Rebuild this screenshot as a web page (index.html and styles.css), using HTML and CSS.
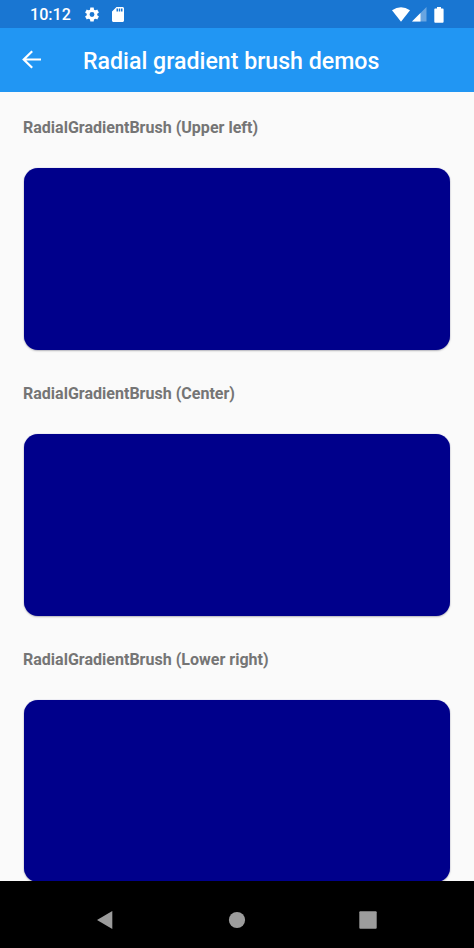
FILE: index.html
```html
<!DOCTYPE html>
<html lang="en">
<head>
<meta charset="utf-8">
<title>Radial gradient brush demos</title>
<link rel="stylesheet" href="styles.css">
</head>
<body>
<div class="screen">
  <div class="status">
    <span class="time">10:12</span>
    <svg class="gear" viewBox="2 2 20 20"><path d="M19.43 12.98c.04-.32.07-.64.07-.98s-.03-.66-.07-.98l2.11-1.65c.19-.15.24-.42.12-.64l-2-3.46c-.12-.22-.39-.3-.61-.22l-2.49 1c-.52-.4-1.08-.73-1.69-.98l-.38-2.65C14.46 2.18 14.25 2 14 2h-4c-.25 0-.46.18-.49.42l-.38 2.65c-.61.25-1.17.59-1.69.98l-2.49-1c-.23-.09-.49 0-.61.22l-2 3.46c-.13.22-.07.49.12.64l2.11 1.65c-.04.32-.07.65-.07.98s.03.66.07.98l-2.11 1.65c-.19.15-.24.42-.12.64l2 3.46c.12.22.39.3.61.22l2.49-1c.52.4 1.08.73 1.69.98l.38 2.65c.03.24.24.42.49.42h4c.25 0 .46-.18.49-.42l.38-2.65c.61-.25 1.17-.59 1.69-.98l2.49 1c.23.09.49 0 .61-.22l2-3.46c.12-.22.07-.49-.12-.64zM12 15.5a3.5 3.5 0 1 1 0-7 3.5 3.5 0 0 1 0 7z"/></svg>
    <svg class="card-icon" viewBox="4 2 16 20"><path d="M18 2h-8L4 8v12c0 1.1.9 2 2 2h12c1.100 0 2-.9 2-2V4c0-1.100-.9-2-2-2zm-6 6h-2V4h2zm3 0h-2V4h2zm3 0h-2V4h2z"/></svg>
    <svg class="wifi" viewBox="0 0 18 15"><path d="M0 3.200Q9-2.800 18 3.200L9 14.800z"/></svg>
    <svg class="signal" viewBox="0 0 15 15"><path class="dim" d="M14.500 0v14.500H0z"/><path d="M8.500 6v8.500H0z"/></svg>
    <svg class="battery" viewBox="0 0 10 16"><path d="M3 0h4v1.600h1.800q.8 0 .8.900v12.200q0 1-.9 1H1.200q-.9 0-.9-1V2.500q0-.9.800-.9H3z"/></svg>
  </div>
  <header class="toolbar">
    <svg class="back" viewBox="0 0 20 19"><path d="M19 9.500H2M10.200 1.200L1.700 9.500l8.500 8.300"/></svg>
    <h1>Radial gradient brush demos</h1>
  </header>
  <main class="content">
    <h2>RadialGradientBrush (Upper left)</h2>
    <div class="swatch"></div>
    <h2>RadialGradientBrush (Center)</h2>
    <div class="swatch"></div>
    <h2>RadialGradientBrush (Lower right)</h2>
    <div class="swatch"></div>
  </main>
  <nav class="navbar">
    <svg viewBox="0 0 20 20"><path d="M2 10L17.300 1v18z"/></svg>
    <svg viewBox="0 0 20 20"><circle cx="10" cy="10" r="8.100"/></svg>
    <svg viewBox="0 0 20 20"><rect x="1.300" y="1.300" width="17.400" height="17.400" rx="1"/></svg>
  </nav>
</div>
</body>
</html>
```
FILE: styles.css
```css
* { box-sizing: border-box; }
body { margin: 0; }
.screen {
  width: 474px;
  height: 948px;
  display: flex;
  flex-direction: column;
  overflow: hidden;
  background: #fafafa;
  font-family: Roboto, sans-serif;
}
.status {
  flex: none;
  height: 28px;
  padding: 1px 30px 0;
  display: flex;
  align-items: center;
  background: #1976d2;
  color: #fff;
}
.status svg { fill: #fff; }
.time { width: 55px; font-size: 16.100px; font-weight: 500; line-height: 28px; }
.gear { width: 14px; height: 15px; }
.card-icon { width: 12px; height: 15px; margin-left: 12.500px; }
.wifi { width: 18px; height: 15px; margin-left: auto; }
.signal { width: 15px; height: 15px; margin-left: 2px; }
.signal .dim { opacity: .35; }
.battery { width: 10px; height: 16px; margin-left: 7.500px; }
.toolbar {
  flex: none;
  height: 64px;
  padding: 0 22px;
  display: flex;
  align-items: center;
  background: #2196f3;
  color: #fff;
}
.back { width: 20px; height: 19px; margin-top: -1px; fill: none; stroke: #fff; stroke-width: 2.200; }
h1 { margin: 4px 0 0 41px; font-size: 23.150px; font-weight: 500; line-height: 32px; white-space: nowrap; }
.content { flex: 1; min-height: 0; padding: 25px 24px 0; overflow: hidden; }
h2 { margin: 0 0 29px -1px; font-size: 16.050px; font-weight: 700; line-height: 22px; color: #757575; white-space: nowrap; }
.swatch {
  height: 182px;
  margin-bottom: 33px;
  border-radius: 14px;
  background: #00008b;
  box-shadow: 0 1px 2px rgba(0, 0, 0, .25), 0 0 1px #9999e0;
}
.navbar {
  flex: none;
  height: 67px;
  padding: 10px 96px 0 95px;
  display: flex;
  justify-content: space-between;
  align-items: center;
  background: #000;
}
.navbar svg { width: 20px; height: 20px; fill: #9c9c9c; }
```
